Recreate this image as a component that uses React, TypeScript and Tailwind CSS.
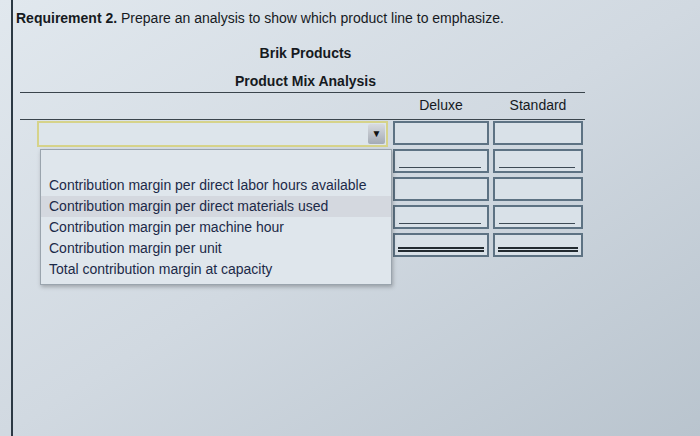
import React from "react";

const options = [
  "",
  "Contribution margin per direct labor hours available",
  "Contribution margin per direct materials used",
  "Contribution margin per machine hour",
  "Contribution margin per unit",
  "Total contribution margin at capacity",
];

// underline: none | single | double
const rows: Array<"none" | "single" | "double"> = ["none", "single", "none", "single", "double"];

function AmountBox({ line, width }: { line: "none" | "single" | "double"; width: string }) {
  return (
    <div className={`relative h-[24px] ${width} border-2 border-[#5d7283] bg-[#d9e1e8]`}>
      {line === "single" && <div className="absolute bottom-[3px] left-[4px] right-[6px] h-px bg-[#3d4a55]" />}
      {line === "double" && (
        <div className="absolute bottom-[3px] left-[3px] right-[3px] flex flex-col gap-[1px]">
          <div className="h-[2px] bg-[#222a30]" />
          <div className="h-[2px] bg-[#222a30]" />
        </div>
      )}
    </div>
  );
}

export default function App() {
  return (
    <div
      className="h-[436px] w-[700px] overflow-hidden bg-gradient-to-br from-[#e1e8ee] via-[#d1d9e1] to-[#b9c4ce] pl-[11px] text-[#161a1e]"
      style={{ fontFamily: '"Liberation Sans", Arial, sans-serif' }}
    >
      <div className="h-full border-l-2 border-[#2c3944] pt-[9px]">
        <p className="pl-[3px] text-[14px] leading-[18px]">
          <span className="font-bold">Requirement 2.</span> Prepare an analysis to show which product line to emphasize.
        </p>

        <div className="ml-[7px] mt-[17px] w-[565px]">
          <div className="pl-[6px] text-center text-[14px] font-bold leading-[18px]">Brik Products</div>
          <div className="mt-[10px] pl-[6px] text-center text-[14px] font-bold leading-[18px]">Product Mix Analysis</div>

          <div className="mt-[2px] border-t border-[#3a444c]" />
          <div className="flex h-[26px] items-end pb-[3px] text-[14px]">
            <div className="w-[373px]" />
            <div className="w-[96px] text-center">Deluxe</div>
            <div className="w-[94px] pl-[4px] text-center">Standard</div>
          </div>
          <div className="border-t border-[#3a444c]" />

          <div className="relative mt-[1px] flex">
            <div className="w-[373px] pl-[17px]">
              <div className="flex h-[26px] w-[351px] items-center justify-end border-2 border-[#d6d38a] bg-[#dde5eb] pr-[1px]">
                <div className="flex h-[20px] w-[17px] items-center justify-center rounded-[2px] bg-gradient-to-b from-[#d8dbe0] to-[#a4abb5] text-[10px] leading-none text-[#111]">
                  ▼
                </div>
              </div>
              <div className="absolute left-[20px] top-[28px] z-10 h-[136px] w-[352px] border border-[#9aa4ad] bg-[#dfe6ec] pt-[25px] shadow-[1px_2px_4px_rgba(0,0,0,0.25)]">
                {options.slice(1).map((o, i) => (
                  <div
                    key={o}
                    className={`h-[21px] pl-[8px] text-[14px] leading-[21px] text-[#1c2a48] ${i === 1 ? "bg-[#d4d8df]" : ""}`}
                  >
                    {o}
                  </div>
                ))}
              </div>
            </div>
            <div className="flex w-[96px] flex-col gap-[4px]">
              {rows.map((r, i) => (
                <AmountBox key={i} line={r} width="w-[96px]" />
              ))}
            </div>
            <div className="ml-[4px] flex w-[90px] flex-col gap-[4px]">
              {rows.map((r, i) => (
                <AmountBox key={i} line={r} width="w-[90px]" />
              ))}
            </div>
          </div>
        </div>
      </div>
    </div>
  );
}
